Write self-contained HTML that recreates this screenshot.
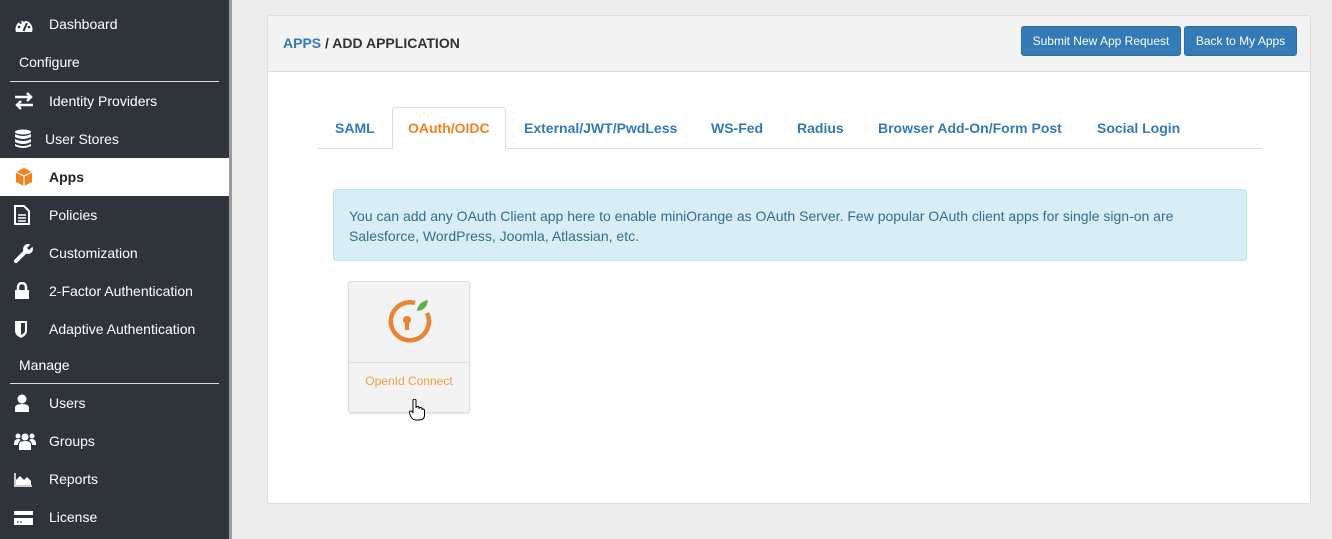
<!DOCTYPE html>
<html><head><meta charset="utf-8"><style>
*{box-sizing:border-box;margin:0;padding:0}
body{width:1332px;height:539px;overflow:hidden;background:#ececec;font-family:"Liberation Sans",Arial,sans-serif;position:relative}
#sb{position:absolute;left:0;top:0;width:229px;height:539px;background:#2f343b}
#sbb{position:absolute;left:229px;top:0;width:3px;height:539px;background:#9a9a9a}
.it{position:absolute;left:0;width:229px;height:38px;color:#fff;font-size:14px;line-height:38px}
.it .t{position:absolute;left:49px;top:0}
.it svg{position:absolute;left:14px;top:10px}
.sec{position:absolute;left:19px;color:#fff;font-size:14px}
.hr{position:absolute;left:10px;width:209px;height:1px;background:#ddd}
#panel{position:absolute;left:267px;top:15px;width:1044px;height:489px;background:#fff;border:1px solid #ddd;border-radius:3px}
#ph{position:absolute;left:0;top:0;width:1042px;height:56px;background:#f3f3f3;border-bottom:1px solid #ddd}
.btn{position:absolute;top:10px;height:30px;background:#337ab7;border:1px solid #2e6da4;border-radius:3px;color:#fff;font-size:12px;line-height:28px;text-align:center}
.tab{position:absolute;top:104px;font-size:14px;font-weight:bold;color:#337ab7}
</style></head><body>
<div id="sb">
<div class="it" style="top:5px"><svg width="20" height="18" viewBox="0 0 20 18" style="top:11px"><path d="M2 16A8.5 8.5 0 1 1 18 16Z" fill="#fff"/><circle cx="5" cy="11" r="1.3" fill="#2f343b"/><circle cx="6.5" cy="6.5" r="1.3" fill="#2f343b"/><circle cx="10" cy="4.5" r="1.3" fill="#2f343b"/><circle cx="15" cy="11" r="1.3" fill="#2f343b"/><path d="M9.5 15L13 7" stroke="#2f343b" stroke-width="2"/></svg><span class="t">Dashboard</span></div>
<div class="sec" style="top:54px">Configure</div>
<div class="hr" style="top:81px"></div>
<div class="it" style="top:82px"><svg width="20" height="18" viewBox="0 0 20 18"><path d="M1 5H16M13 1L17 5L13 9M19 13H4M7 9L3 13L7 17" stroke="#fff" stroke-width="2.5" fill="none"/></svg><span class="t">Identity Providers</span></div>
<div class="it" style="top:120px"><svg width="18" height="20" viewBox="0 0 18 20" style="top:9px"><ellipse cx="9" cy="3" rx="8" ry="2.5" fill="#fff"/><path d="M1 5Q9 9 17 5V8Q9 12 1 8ZM1 10Q9 14 17 10V13Q9 17 1 13ZM1 15Q9 19 17 15V17Q9 21 1 17Z" fill="#fff"/></svg><span class="t" style="left:45px">User Stores</span></div>
<div class="it" style="top:158px;background:#fff;color:#222;font-weight:bold"><svg width="20" height="20" viewBox="0 0 20 20" style="top:9px"><path d="M10 1L18 5V15L10 19L2 15V5Z" fill="#f0831e"/><path d="M10 9L18 5M10 9L2 5M10 9V19" stroke="#fff" stroke-width="1.2" fill="none"/></svg><span class="t">Apps</span></div>
<div class="it" style="top:196px"><svg width="16" height="20" viewBox="0 0 16 20" style="top:9px"><path d="M1 1H10L15 6V19H1Z" fill="none" stroke="#fff" stroke-width="2"/><path d="M4 10H12M4 13H12M4 16H12" stroke="#fff" stroke-width="1.5"/></svg><span class="t">Policies</span></div>
<div class="it" style="top:234px"><svg width="20" height="20" viewBox="0 0 20 20" style="top:9px"><path d="M2 18L11 9" stroke="#fff" stroke-width="4" stroke-linecap="round"/><circle cx="14" cy="6" r="5" fill="#fff"/><path d="M14 6L19 1" stroke="#2f343b" stroke-width="3"/></svg><span class="t">Customization</span></div>
<div class="it" style="top:272px"><svg width="16" height="18" viewBox="0 0 16 18"><path d="M4 8V5A4 4 0 0 1 12 5V8" stroke="#fff" stroke-width="2.5" fill="none"/><rect x="1" y="8" width="14" height="9" fill="#fff"/></svg><span class="t">2-Factor Authentication</span></div>
<div class="it" style="top:310px"><svg width="14" height="18" viewBox="0 0 14 18"><path d="M1 1H13V11Q13 15 7 18Q1 15 1 11Z" fill="#fff"/><path d="M7 3H11V11Q11 13 7 15Z" fill="#2f343b"/></svg><span class="t">Adaptive Authentication</span></div>
<div class="sec" style="top:357px">Manage</div>
<div class="hr" style="top:383px"></div>
<div class="it" style="top:384px"><svg width="16" height="18" viewBox="0 0 16 18"><circle cx="8" cy="5" r="4.5" fill="#fff"/><path d="M1 18V14Q1 10 8 10Q15 10 15 14V18Z" fill="#fff"/></svg><span class="t">Users</span></div>
<div class="it" style="top:422px"><svg width="22" height="18" viewBox="0 0 22 18"><circle cx="11" cy="5" r="3.5" fill="#fff"/><circle cx="4" cy="4" r="2.5" fill="#fff"/><circle cx="18" cy="4" r="2.5" fill="#fff"/><path d="M5 18V13Q5 9 11 9Q17 9 17 13V18Z" fill="#fff"/><path d="M0 12Q0 7 4 7Q6 7 7 8Q4 10 4 13H0ZM22 12Q22 7 18 7Q16 7 15 8Q18 10 18 13H22Z" fill="#fff"/></svg><span class="t">Groups</span></div>
<div class="it" style="top:460px"><svg width="18" height="14" viewBox="0 0 18 14" style="top:13px"><path d="M1 0V13H18" stroke="#fff" stroke-width="1.5" fill="none"/><path d="M2 12V7L6 3L10 7L13 4L17 8V12Z" fill="#fff"/></svg><span class="t">Reports</span></div>
<div class="it" style="top:498px"><svg width="20" height="16" viewBox="0 0 20 16" style="top:12px"><rect x="0" y="1" width="19" height="14" fill="#fff"/><rect x="0" y="5" width="19" height="3" fill="#2f343b"/><path d="M3 12H9" stroke="#2f343b" stroke-width="1" stroke-dasharray="2 1"/></svg><span class="t">License</span></div>
</div>
<div id="sbb"></div>
<div id="panel">
<div id="ph">
<div style="position:absolute;left:15px;top:19px;font-size:14px;font-weight:bold;color:#333"><span style="color:#337ab7">APPS</span> / ADD APPLICATION</div>
<div class="btn" style="left:753px;width:160px">Submit New App Request</div>
<div class="btn" style="left:916px;width:113px">Back to My Apps</div>
</div>
<div style="position:absolute;left:50px;top:132px;width:944px;height:1px;background:#ddd"></div>
<div style="position:absolute;left:124px;top:91px;width:114px;height:42px;background:#fff;border:1px solid #ddd;border-bottom:none;border-radius:3px 3px 0 0"></div>
<div class="tab" style="left:67px">SAML</div>
<div class="tab" style="left:140px;color:#f0831e">OAuth/OIDC</div>
<div class="tab" style="left:256px">External/JWT/PwdLess</div>
<div class="tab" style="left:443px">WS-Fed</div>
<div class="tab" style="left:529px">Radius</div>
<div class="tab" style="left:610px">Browser Add-On/Form Post</div>
<div class="tab" style="left:829px">Social Login</div>
<div style="position:absolute;left:65px;top:173px;width:914px;height:72px;background:#d9edf7;border:1px solid #bce8f1;border-radius:3px;color:#31708f;font-size:14px;line-height:20px;padding:16px 15px">You can add any OAuth Client app here to enable miniOrange as OAuth Server. Few popular OAuth client apps for single sign-on are Salesforce, WordPress, Joomla, Atlassian, etc.</div>
<div style="position:absolute;left:80px;top:265px;width:122px;height:132px;background:#f3f3f3;border:1px solid #ddd;border-radius:3px;box-shadow:0 1px 2px rgba(0,0,0,.1)">
<svg width="50" height="50" viewBox="0 0 50 50" style="position:absolute;left:36px;top:15px"><path d="M30 6A19 19 0 1 0 42 16" fill="none" stroke="#ee8232" stroke-width="4.5"/><circle cx="22" cy="23" r="4" fill="#ee8232"/><path d="M20 25H24V33H20Z" fill="#ee8232"/><path d="M32 14Q33 5 43 3Q42 13 32 14Z" fill="#5fb04a"/></svg>
<div style="position:absolute;left:0;top:80px;width:120px;height:1px;background:#ddd"></div>
<div style="position:absolute;left:0;top:92px;width:120px;text-align:center;font-size:12px;color:#f0a040">OpenId Connect</div>
<svg width="16" height="22" viewBox="0 0 16 22" style="position:absolute;left:60px;top:117px"><path d="M4 12V2Q4 0 5.5 0Q7 0 7 2V9Q7 7.5 8.5 7.5Q10 7.5 10 9V10Q10 8.5 11.5 8.5Q13 8.5 13 10V11Q13 10 14 10Q15.5 10 15.5 12V16Q15.5 21 10 21H7Q4 21 2 18L0.5 14Q0 12 2 12Q3 12 4 14Z" fill="#fff" stroke="#000" stroke-width="1"/></svg>
</div>
</div>
</body></html>
